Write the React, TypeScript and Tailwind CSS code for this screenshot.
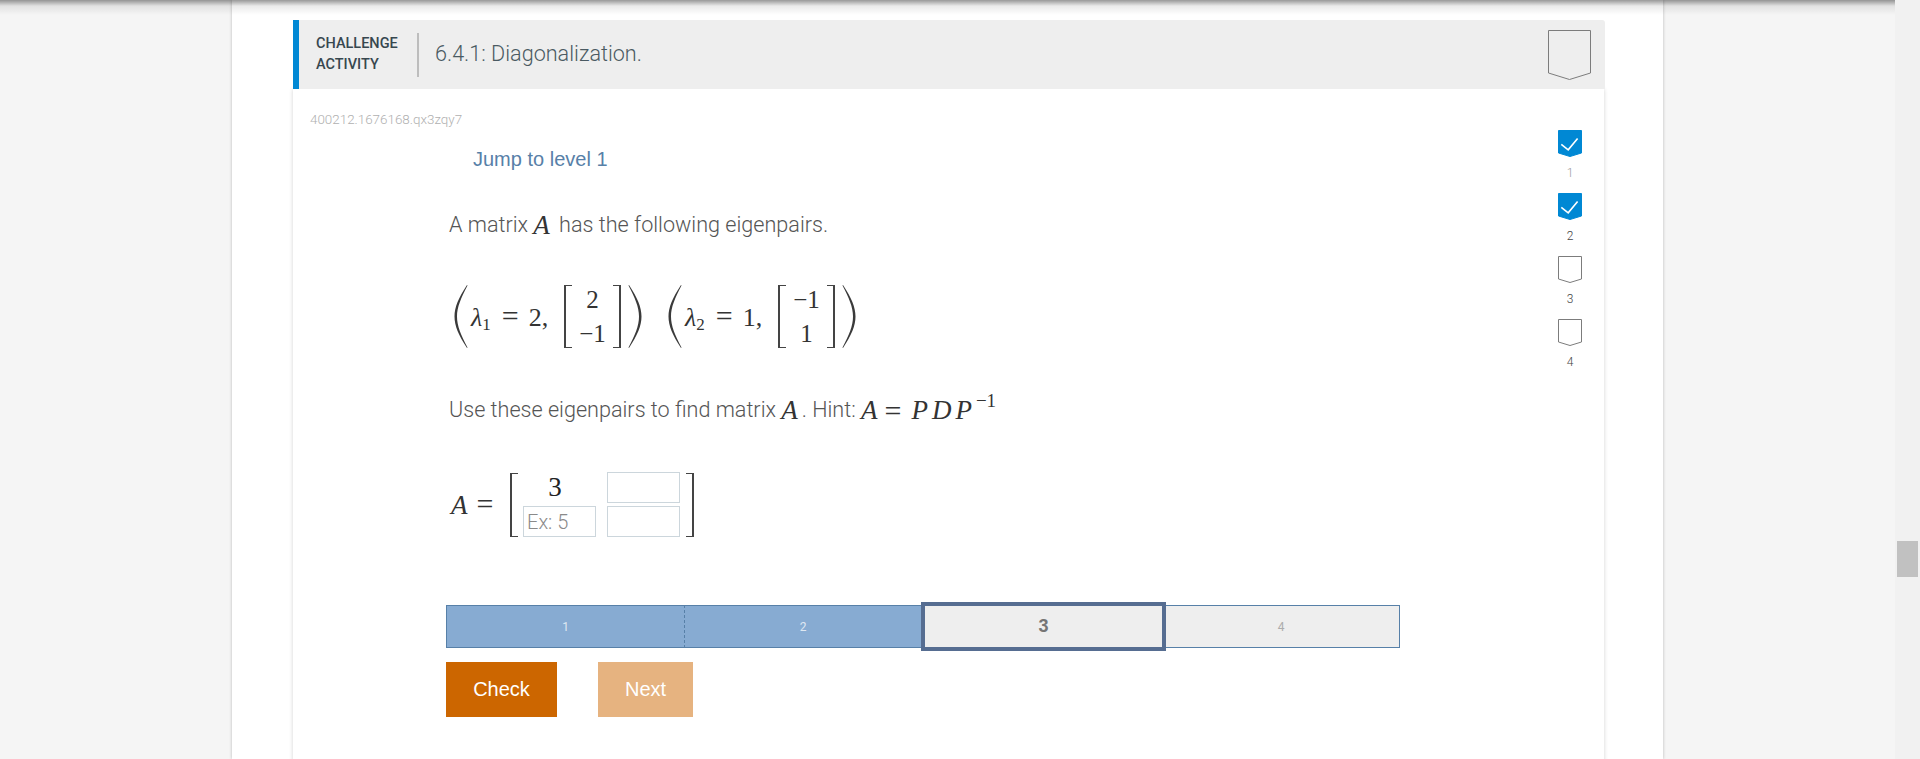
import React from "react";

const ROBOTO = "font-['Roboto',sans-serif]";
const SERIF = "font-['Liberation_Serif',serif]";

const LEVELS = [
  { n: 1, done: true },
  { n: 2, done: true },
  { n: 3, done: false },
  { n: 4, done: false },
];

const Shield = ({ w, h, done }: { w: number; h: number; done?: boolean }) => {
  const notch = Math.round(h * 0.13);
  const points = `0.5,0.5 ${w - 0.5},0.5 ${w - 0.5},${h - notch} ${w / 2},${h - 0.5} 0.5,${h - notch}`;
  return (
    <svg width={w} height={h} viewBox={`0 0 ${w} ${h}`} className="block">
      <polygon
        points={points}
        fill={done ? "#0088d4" : "none"}
        stroke={done ? "#0088d4" : "#7c7c7c"}
        strokeWidth="1"
      />
      {done && (
        <path d="M3.3 14.3 L10.2 19.8 L19.6 8.4" fill="none" stroke="#fff" strokeWidth="1.6" />
      )}
    </svg>
  );
};

const Paren = ({ flip }: { flip?: boolean }) => (
  <svg width="14" height="63" viewBox="0 0 14 63" className={flip ? "block shrink-0 -scale-x-100" : "block shrink-0"}>
    <path
      d="M13 0 C4.5 13 .5 22 .5 31.5 C.5 41 4.5 50 13 63 L13.5 62.5 C7 50 3 41 3 31.5 C3 22 7 13 13.5 .5Z"
      fill="#3a3a3a"
    />
  </svg>
);

const Bracket = ({ right, h }: { right?: boolean; h: string }) => (
  <div
    className={`${h} w-[8px] shrink-0 border-y border-[#444] ${
      right ? "border-r-2" : "border-l-2"
    }`}
  />
);

const Vec = ({ a, b }: { a: string; b: string }) => (
  <div className="flex items-center">
    <Bracket h="h-[63px]" />
    <div className={`flex h-[63px] w-[41px] flex-col items-center justify-between text-[25px] leading-[29px] text-[#333] ${SERIF}`}>
      <span>{a}</span>
      <span>{b}</span>
    </div>
    <Bracket right h="h-[63px]" />
  </div>
);

const Pair = ({ sub, val, a, b }: { sub: string; val: string; a: string; b: string }) => (
  <div className="flex items-center">
    <Paren />
    <span className={`ml-[3px] w-[90px] -mt-[3px] whitespace-nowrap text-[26px] text-[#333] ${SERIF}`}>
      <i>λ</i>
      <sub className="text-[17px]">{sub}</sub>
      <span className="ml-[11px] text-[30px] font-light">=</span>
      <span className="ml-[10px]">{val},</span>
    </span>
    <div className="ml-[3px]">
      <Vec a={a} b={b} />
    </div>
    <div className="ml-[7px]">
      <Paren flip />
    </div>
  </div>
);

const Cell = ({ placeholder }: { placeholder?: string }) => (
  <input
    readOnly
    placeholder={placeholder}
    className={`h-[31px] w-[73px] border border-[#ccd6dc] px-[3px] text-[20px] font-light text-[#333] outline-none placeholder:text-[#8a8a8a] ${ROBOTO}`}
  />
);

const MathVar = ({ children }: { children: React.ReactNode }) => (
  <i className={`text-[27px] leading-none tracking-[4px] text-[#333] ${SERIF}`}>{children}</i>
);

export default function App() {
  return (
    <div className="relative flex h-[759px] w-[1920px] overflow-hidden bg-[#f5f5f5]">
      {/* page column */}
      <div className="relative flex-1">
        <div className="ml-[232px] h-full w-[1431px] bg-white px-[61px] pt-[20px] shadow-[0_0_3px_rgba(0,0,0,0.25)]">
          {/* activity card */}
          <div className="h-[900px] w-[1311px]">
            <div className={`relative z-10 flex h-[69px] w-[1312px] items-center rounded-tr-[3px] border-l-[6px] border-[#0088d4] bg-[#eeeeee] ${ROBOTO}`}>
              <div className="ml-[17px] -mt-[2px] w-[101px] text-[14.5px] font-medium leading-[21px] text-[#37474f]">
                CHALLENGE
                <br />
                ACTIVITY
              </div>
              <div className="h-[44px] w-[2px] bg-[#bdbdbd]" />
              <div className="ml-[16px] text-[21.6px] font-light text-[#4a5a62]">6.4.1: Diagonalization.</div>
              <div className="ml-auto mr-[14px]">
                <Shield w={43} h={50} />
              </div>
            </div>

            <div className="flex h-[831px] shadow-[0_0_4px_rgba(0,0,0,0.18)]">
              <div className="flex-1">
                <div className={`ml-[17px] mt-[23px] h-[16px] text-[13.4px] font-light leading-[16px] text-[#b0b0b0] ${ROBOTO}`}>
                  400212.1676168.qx3zqy7
                </div>
                <div className="ml-[180px] mt-[19px] h-[24px] font-['Liberation_Sans',sans-serif] text-[20px] leading-[24px] text-[#5780a8]">
                  Jump to level 1
                </div>

                <div className="ml-[156px]">
                  <div className={`mt-[40px] flex h-[28px] items-center whitespace-pre text-[21.6px] font-light text-[#555] ${ROBOTO}`}>
                    A matrix <MathVar>A</MathVar> has the following eigenpairs.
                  </div>

                  <div className="mt-[46px] flex h-[63px] items-center gap-[26px] pl-[5px]">
                    <Pair sub="1" val="2" a="2" b="−1" />
                    <Pair sub="2" val="1" a="−1" b="1" />
                  </div>

                  <div className={`mt-[48px] flex h-[28px] items-center whitespace-pre text-[21.6px] font-light text-[#555] ${ROBOTO}`}>
                    Use these eigenpairs to find matrix <MathVar>A</MathVar>. Hint: <MathVar>A</MathVar>
                    <span className={`ml-[3px] mr-[10px] text-[30px] font-normal text-[#333] ${SERIF}`}>=</span>
                    <MathVar>PDP</MathVar>
                    <sup className={`-top-[9px] text-[19px] font-normal text-[#333] ${SERIF}`}>−1</sup>
                  </div>

                  <div className="mt-[48px] flex h-[65px] items-center">
                    <span className={`ml-[2px] w-[59px] -mt-[3px] whitespace-nowrap text-[27px] text-[#333] ${SERIF}`}>
                      <i className="tracking-[3px]">A</i>
                      <span className="ml-[6px] text-[30px]">=</span>
                    </span>
                    <Bracket h="h-[64px]" />
                    <div className="ml-[5px] flex h-[65px] flex-col justify-between">
                      <div className={`flex h-[31px] w-[73px] items-center justify-center pr-[9px] text-[27px] text-[#222] ${SERIF}`}>
                        3
                      </div>
                      <Cell placeholder="Ex: 5" />
                    </div>
                    <div className="ml-[11px] flex h-[65px] flex-col justify-between">
                      <Cell />
                      <Cell />
                    </div>
                    <div className="ml-[6px]">
                      <Bracket right h="h-[64px]" />
                    </div>
                  </div>
                </div>

                {/* level bar */}
                <div className={`ml-[153px] mt-[65px] flex h-[49px] w-[954px] items-center text-[12px] ${ROBOTO}`}>
                  <div className="flex h-[43px] w-[239px] items-center justify-center border border-[#5780a8] bg-[#87abd2] text-[#dfe8f2] [border-right-style:dashed]">
                    1
                  </div>
                  <div className="flex h-[43px] w-[236px] items-center justify-center border-y border-[#5780a8] bg-[#87abd2] text-[#dfe8f2]">
                    2
                  </div>
                  <div className="flex h-[49px] w-[245px] items-center justify-center border-[4px] border-[#566d91] bg-[#eeeeee] font-['Liberation_Sans',sans-serif] text-[18px] font-bold text-[#757575]">
                    3
                  </div>
                  <div className="flex h-[43px] w-[234px] items-center justify-center border-y border-r border-[#5780a8] bg-[#eeeeee] pr-[3px] text-[#acacac]">
                    4
                  </div>
                </div>

                <div className="ml-[153px] mt-[11px] flex gap-[41px] font-['Liberation_Sans',sans-serif] text-[20px] text-white">
                  <div className="flex h-[55px] w-[111px] items-center justify-center bg-[#cc6600] pb-[1px]">Check</div>
                  <div className="flex h-[55px] w-[95px] items-center justify-center bg-[#e6b380] pb-[1px]">Next</div>
                </div>
              </div>

              {/* level rail */}
              <div className="flex w-[68px] flex-col items-center pt-[41px]">
                {LEVELS.map((l) => (
                  <div key={l.n} className="flex h-[63px] flex-col items-center">
                    <Shield w={24} h={27} done={l.done} />
                    <span className={`mt-[8px] text-[12px] font-light leading-[16px] ${l.n === 1 ? "text-[#9a9a9a]" : "text-[#444]"} ${ROBOTO}`}>
                      {l.n}
                    </span>
                  </div>
                ))}
              </div>
            </div>
          </div>
        </div>
        {/* top bar shadow */}
        <div className="absolute inset-x-0 top-0 z-20 h-[15px] bg-gradient-to-b from-black/40 via-black/8 via-40% to-transparent" />
      </div>

      {/* scrollbar */}
      <div className="w-[25px] bg-[#f1f1f1] pl-[2px] pt-[541px]">
        <div className="h-[36px] w-[21px] bg-[#c1c1c1]" />
      </div>
    </div>
  );
}
